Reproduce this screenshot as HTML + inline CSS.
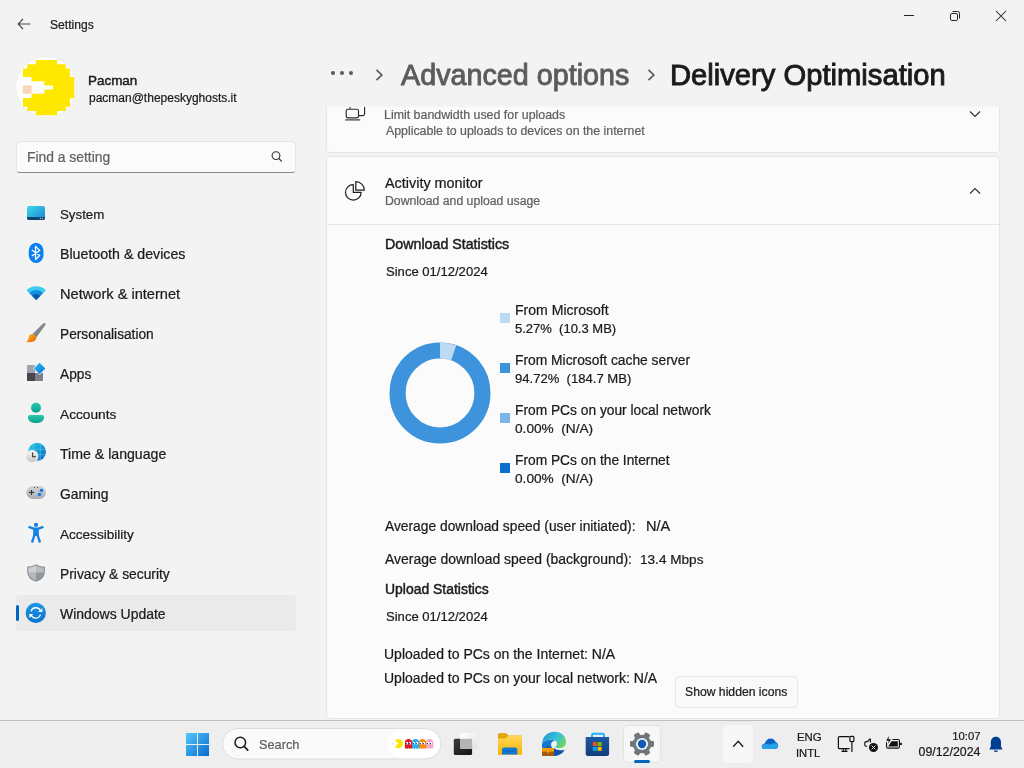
<!DOCTYPE html>
<html><head><meta charset="utf-8"><title>Settings</title>
<style>
html,body{margin:0;padding:0;}
body{width:1024px;height:768px;overflow:hidden;position:relative;background:#f3f3f3;font-family:"Liberation Sans",sans-serif;}
.a{position:absolute;}
.t{position:absolute;white-space:pre;will-change:transform;-webkit-text-stroke:0.22px currentColor;}
svg{display:block;overflow:visible}
</style></head><body>
<svg class="a" style="left:17px;top:18px" width="14" height="12" viewBox="0 0 14 12"><path d="M6 1 L1.2 6 L6 11 M1.2 6 H13.5" fill="none" stroke="#444" stroke-width="1.1"/></svg>
<div class="t" style="left:50.00px;top:18px;font-size:12.1px;line-height:14px;color:#1a1a1a;font-weight:400;">Settings</div>
<div class="a" style="left:904px;top:15px;width:10px;height:1px;background:#222"></div>
<svg class="a" style="left:949px;top:10px" width="12" height="12" viewBox="0 0 12 12"><rect x="1.5" y="3.5" width="7" height="7" rx="1.3" fill="none" stroke="#222" stroke-width="1"/><path d="M3.5 1.5 H8.5 A2 2 0 0 1 10.5 3.5 V8.5" fill="none" stroke="#222" stroke-width="1"/></svg>
<svg class="a" style="left:995px;top:10px" width="12" height="12" viewBox="0 0 12 12"><path d="M1 1 L11 11 M11 1 L1 11" stroke="#222" stroke-width="1.05"/></svg>
<div class="a" style="left:16px;top:57px;width:60px;height:60px;border-radius:50%;background:#fdfdfd;box-shadow:0 0 0 0.5px #e8e8e8"></div>
<svg class="a" style="left:22.75px;top:59.8px" width="51.25" height="55" viewBox="0 0 12 13" preserveAspectRatio="none"><path fill="#ffe800" d="M3 0h5v1.04h-5zM1 1h9v1.04h-9zM0 2h11v1.04h-11zM0 3h11v1.04h-11zM2 4h10v1.04h-10zM5 5h7v1.04h-7zM7 6h5v1.04h-5zM5 7h7v1.04h-7zM2 8h10v1.04h-10zM0 9h11v1.04h-11zM0 10h11v1.04h-11zM1 11h9v1.04h-9zM3 12h5v1.04h-5z"/><rect x="0" y="6" width="2" height="2" fill="#f9d6b8"/></svg>
<div class="t" style="left:87.60px;top:73px;font-size:13.45px;line-height:15px;color:#1a1a1a;font-weight:400;-webkit-text-stroke:0.45px #1a1a1a;">Pacman</div>
<div class="t" style="left:88.50px;top:91px;font-size:12.01px;line-height:14px;color:#1a1a1a;font-weight:400;">pacman@thepeskyghosts.it</div>
<div class="a" style="left:16px;top:141px;width:278px;height:30px;border:1px solid #e5e5e5;border-bottom:1px solid #8a8a8a;border-radius:4px;background:#fbfbfb"></div>
<div class="t" style="left:26.80px;top:149px;font-size:13.85px;line-height:16px;color:#616161;font-weight:400;">Find a setting</div>
<svg class="a" style="left:270px;top:150px" width="14" height="14" viewBox="0 0 14 14"><circle cx="6" cy="5.6" r="3.9" fill="none" stroke="#333" stroke-width="1.1"/><path d="M8.8 8.4 L11.8 11.6" stroke="#333" stroke-width="1.2"/></svg>
<div class="a" style="left:16px;top:595px;width:280px;height:36px;border-radius:4px;background:#eaeaea"></div>
<div class="a" style="left:16px;top:605px;width:3px;height:16px;border-radius:1.5px;background:#0067c0"></div>
<div class="t" style="left:60.30px;top:207px;font-size:13.31px;line-height:15px;color:#1a1a1a;font-weight:400;">System</div>
<div class="t" style="left:60.30px;top:246px;font-size:14.19px;line-height:16px;color:#1a1a1a;font-weight:400;">Bluetooth &amp; devices</div>
<div class="t" style="left:60.30px;top:286px;font-size:14.62px;line-height:16px;color:#1a1a1a;font-weight:400;">Network &amp; internet</div>
<div class="t" style="left:60.30px;top:327px;font-size:13.71px;line-height:15px;color:#1a1a1a;font-weight:400;">Personalisation</div>
<div class="t" style="left:60.30px;top:367px;font-size:13.74px;line-height:15px;color:#1a1a1a;font-weight:400;">Apps</div>
<div class="t" style="left:60.30px;top:407px;font-size:13.69px;line-height:15px;color:#1a1a1a;font-weight:400;">Accounts</div>
<div class="t" style="left:60.30px;top:446px;font-size:14.14px;line-height:16px;color:#1a1a1a;font-weight:400;">Time &amp; language</div>
<div class="t" style="left:60.30px;top:486px;font-size:13.87px;line-height:16px;color:#1a1a1a;font-weight:400;">Gaming</div>
<div class="t" style="left:60.30px;top:527px;font-size:13.55px;line-height:15px;color:#1a1a1a;font-weight:400;">Accessibility</div>
<div class="t" style="left:60.30px;top:566px;font-size:13.82px;line-height:16px;color:#1a1a1a;font-weight:400;">Privacy &amp; security</div>
<div class="t" style="left:60.30px;top:606px;font-size:13.98px;line-height:16px;color:#1a1a1a;font-weight:400;">Windows Update</div>
<svg class="a" style="left:0;top:0" width="60" height="640" viewBox="0 0 60 640">
<defs>
<linearGradient id="gSys" x1="0" y1="0" x2="1" y2="1"><stop offset="0" stop-color="#3fd8e8"/><stop offset="1" stop-color="#1a86d6"/></linearGradient>
<linearGradient id="gBrush" x1="0" y1="0" x2="1" y2="1"><stop offset="0" stop-color="#a8aeb4"/><stop offset="1" stop-color="#5b636b"/></linearGradient>
<linearGradient id="gBr" x1="0" y1="0" x2="1" y2="1"><stop offset="0" stop-color="#ffc21a"/><stop offset="1" stop-color="#ec5a0c"/></linearGradient>
<linearGradient id="gDia" x1="0" y1="0" x2="1" y2="1"><stop offset="0" stop-color="#2fc0f2"/><stop offset="1" stop-color="#0a70d6"/></linearGradient>
<linearGradient id="gAcc" x1="0" y1="0" x2="0" y2="1"><stop offset="0" stop-color="#25cbb2"/><stop offset="1" stop-color="#0e9e88"/></linearGradient>
<linearGradient id="gGlobe" x1="0" y1="0" x2="1" y2="1"><stop offset="0" stop-color="#30d0ea"/><stop offset="1" stop-color="#0b62c0"/></linearGradient>
<linearGradient id="gClock" x1="0" y1="0" x2="0" y2="1"><stop offset="0" stop-color="#f4f4f4"/><stop offset="1" stop-color="#c8c8c8"/></linearGradient>
<linearGradient id="gPad" x1="0" y1="0" x2="0" y2="1"><stop offset="0" stop-color="#d2d5d9"/><stop offset="1" stop-color="#a9aeb4"/></linearGradient>
<linearGradient id="gUpd" x1="0" y1="0" x2="0" y2="1"><stop offset="0" stop-color="#1e98e6"/><stop offset="1" stop-color="#0a72d0"/></linearGradient>
</defs>
<!-- System -->
<rect x="27" y="206" width="18" height="14" rx="2" fill="url(#gSys)"/>
<path d="M27 217 H45 V218 A2 2 0 0 1 43 220 H29 A2 2 0 0 1 27 218 Z" fill="#0b4670"/>
<circle cx="40.3" cy="218.4" r="0.6" fill="#cfe6f5"/><circle cx="42.4" cy="218.4" r="0.6" fill="#cfe6f5"/>
<!-- Bluetooth -->
<rect x="28.7" y="242.8" width="14.8" height="20.2" rx="7.3" ry="8.6" fill="#0a7ff2"/>
<path d="M32.2 250.3 L39.7 255.5 L35.5 259.4 V246.4 L39.7 250.5 L32.2 255.7" fill="none" stroke="#fff" stroke-width="1.3" stroke-linejoin="round" stroke-linecap="round"/>
<!-- Wifi -->
<path d="M36.2 300 L26.44 290.24 A13.8 13.8 0 0 1 45.96 290.24 Z" fill="#3ccaf2"/>
<path d="M36.2 300 L29.2 293 A9.9 9.9 0 0 1 43.2 293 Z" fill="#148ee0"/>
<path d="M36.2 300 L32.03 295.83 A5.9 5.9 0 0 1 40.37 295.83 Z" fill="#0b58a6"/>
<!-- Brush -->
<path d="M43.4 323.3 C44.3 322.5 45.9 323.6 45.5 324.7 L36.2 337.4 L31.8 334.4 Z" fill="url(#gBrush)"/>
<path d="M31 334.3 C33.9 333.6 36.8 335.4 36.2 338.6 C35.6 341.7 31.3 343 26 342 C27.9 341 28.3 339.2 28.7 337.4 C29.1 335.6 29.7 334.6 31 334.3 Z" fill="url(#gBr)"/>
<!-- Apps -->
<rect x="27" y="365" width="8" height="8" fill="#a0a5ab"/>
<rect x="27" y="373" width="8" height="8" fill="#44484d"/>
<rect x="35" y="373" width="8" height="8" fill="#7c8086"/>
<path d="M39.6 362 L46.1 368.5 L39.6 375 L33.1 368.5 Z" fill="#f3f3f3"/>
<path d="M39.6 362.8 L45.3 368.5 L39.6 374.2 L33.9 368.5 Z" fill="url(#gDia)"/>
<!-- Accounts -->
<circle cx="36" cy="407.8" r="5" fill="url(#gAcc)"/>
<path d="M28 416.9 A1.9 1.9 0 0 1 29.9 415 H42.1 A1.9 1.9 0 0 1 44 416.9 V417.4 C44 420.9 40.5 423 36 423 C31.5 423 28 420.9 28 417.4 Z" fill="url(#gAcc)"/>
<!-- Time & language -->
<circle cx="37" cy="451.8" r="9" fill="url(#gGlobe)"/>
<path d="M33.9 443.2 V460.4 M40.3 443.2 V460.4 M28.2 449.3 H45.8 M28.2 454.5 H45.8" stroke="#5ad8f2" stroke-width="0.6" opacity="0.8"/>
<circle cx="32" cy="456.3" r="6.4" fill="#f3f3f3"/>
<circle cx="32" cy="456.3" r="5.9" fill="url(#gClock)"/>
<path d="M32.6 452.4 V456.6 H35.7" fill="none" stroke="#444" stroke-width="1.2"/>
<!-- Gaming -->
<rect x="26.2" y="486" width="19.8" height="13" rx="6.5" fill="url(#gPad)"/>
<path d="M29 492.4 H34 M31.5 489.9 V494.9" stroke="#353535" stroke-width="1.1"/>
<circle cx="41.5" cy="490.4" r="1.7" fill="#0a76e0"/><circle cx="39.5" cy="494.4" r="1.7" fill="#0a76e0"/>
<circle cx="34.4" cy="487.5" r="0.55" fill="#333"/><circle cx="37.5" cy="487.5" r="0.55" fill="#333"/>
<!-- Accessibility -->
<g fill="#1583e0" stroke="#1583e0">
<circle cx="36" cy="524.9" r="2.1" stroke="none"/>
<path d="M29.4 527.1 L33.5 528.6 H38.5 L42.6 527.1" fill="none" stroke-width="2.3" stroke-linecap="round" stroke-linejoin="round"/>
<rect x="33.2" y="528" width="5.6" height="8" stroke="none"/>
<path d="M34.3 535.5 L32.3 541.6 M37.7 535.5 L39.7 541.6" fill="none" stroke-width="2.4" stroke-linecap="round"/>
</g>
<!-- Shield -->
<path d="M36 564.2 C38.6 565.8 41.6 566.6 44.9 566.6 V571.2 C44.9 576.6 41.5 580 36 581.8 C30.5 580 27.2 576.6 27.2 571.2 V566.6 C30.4 566.6 33.4 565.8 36 564.2 Z" fill="#8e9399"/>
<path d="M36 565.6 C38.3 566.9 41 567.6 43.7 567.7 V572.8 H36 Z" fill="#b9bdc2"/>
<path d="M36 565.6 C33.7 566.9 31 567.6 28.4 567.7 V572.8 H36 Z" fill="#cdd1d5"/>
<path d="M28.4 572.8 H36 V580.4 C31.4 578.8 28.6 576.2 28.4 572.8 Z" fill="#b3b7bc"/>
<path d="M43.7 572.8 H36 V580.4 C40.6 578.8 43.5 576.2 43.7 572.8 Z" fill="#92979d"/>
<!-- Windows Update -->
<circle cx="35.8" cy="612.9" r="10.1" fill="url(#gUpd)"/>
<path d="M31 611.2 A5.1 5.1 0 0 1 40.4 610.6" fill="none" stroke="#fff" stroke-width="1.3"/>
<path d="M38.3 611.9 H42.3 V607.9 Z" fill="#fff"/>
<path d="M40.6 614.6 A5.1 5.1 0 0 1 31.2 615.2" fill="none" stroke="#fff" stroke-width="1.3"/>
<path d="M33.3 613.9 H29.3 V617.9 Z" fill="#fff"/>
</svg>

<div class="a" style="left:331.3px;top:71px;width:4px;height:4px;border-radius:50%;background:#5a5a5a"></div>
<div class="a" style="left:340.2px;top:71px;width:4px;height:4px;border-radius:50%;background:#5a5a5a"></div>
<div class="a" style="left:348.8px;top:71px;width:4px;height:4px;border-radius:50%;background:#5a5a5a"></div>
<svg class="a" style="left:374px;top:68px" width="12" height="14" viewBox="0 0 12 14"><path d="M2.5 1.8 L7.8 7 L2.5 12.2" fill="none" stroke="#5a5a5a" stroke-width="1.7"/></svg>
<div class="t" style="left:401.40px;top:59px;font-size:28.72px;line-height:32px;color:#5c5c5c;font-weight:400;-webkit-text-stroke:0.9px #5c5c5c;">Advanced options</div>
<svg class="a" style="left:646px;top:68px" width="12" height="14" viewBox="0 0 12 14"><path d="M2.5 1.8 L7.8 7 L2.5 12.2" fill="none" stroke="#5a5a5a" stroke-width="1.7"/></svg>
<div class="t" style="left:669.80px;top:59px;font-size:29.2px;line-height:32px;color:#1a1a1a;font-weight:400;-webkit-text-stroke:0.9px #1a1a1a;">Delivery Optimisation</div>
<div class="a" style="left:0;top:107px;width:1024px;height:613px;overflow:hidden">
<div class="a" style="left:326px;top:-60px;width:674px;height:106px;border:1px solid #e5e5e5;border-radius:4px;background:#fbfbfb;box-sizing:border-box;"></div>
<div class="t" style="left:384.30px;top:1px;font-size:12.4px;line-height:14px;color:#5f5f5f;font-weight:400;">Limit bandwidth used for uploads</div>
<div class="t" style="left:385.50px;top:17px;font-size:12.35px;line-height:14px;color:#5f5f5f;font-weight:400;">Applicable to uploads to devices on the internet</div>
<svg class="a" style="left:344px;top:-4px" width="24" height="20" viewBox="0 0 24 20"><rect x="2.2" y="6.2" width="12.3" height="8.6" rx="1.6" fill="none" stroke="#2a2a2a" stroke-width="1.15"/><path d="M6 6.2 V2" stroke="#2a2a2a" stroke-width="1"/><path d="M14.5 12.6 H18.5 A2 2 0 0 0 20.6 10.6 V2" fill="none" stroke="#2a2a2a" stroke-width="1.15"/><path d="M1.2 16.9 H16.2" stroke="#333" stroke-width="1.15"/></svg>
<svg class="a" style="left:968px;top:2px" width="14" height="10" viewBox="0 0 14 10"><path d="M2 2.5 L7 7.5 L12 2.5" fill="none" stroke="#333" stroke-width="1.2"/></svg>
<div class="a" style="left:326px;top:49px;width:674px;height:563px;border:1px solid #e5e5e5;border-radius:4px;background:#fbfbfb;box-sizing:border-box;"></div>
<div class="a" style="left:327px;top:117px;width:672px;height:1px;background:#e5e5e5"></div>
<svg class="a" style="left:344px;top:73px" width="22" height="22" viewBox="0 0 22 22"><path d="M9.3 4.6 A7.8 7.8 0 1 0 17.1 12.4 H9.3 Z" fill="none" stroke="#1e1e1e" stroke-width="1.2" stroke-linejoin="round"/><path d="M11.8 1.7 A8.5 8.5 0 0 1 20.3 10.2 H11.8 Z" fill="none" stroke="#1e1e1e" stroke-width="1.2" stroke-linejoin="round"/></svg>
<div class="t" style="left:385.40px;top:68px;font-size:14.4px;line-height:16px;color:#1a1a1a;font-weight:400;">Activity monitor</div>
<div class="t" style="left:384.80px;top:87px;font-size:12.24px;line-height:14px;color:#5f5f5f;font-weight:400;">Download and upload usage</div>
<svg class="a" style="left:968px;top:79px" width="14" height="10" viewBox="0 0 14 10"><path d="M2 7.5 L7 2.5 L12 7.5" fill="none" stroke="#333" stroke-width="1.2"/></svg>
<div class="t" style="left:384.50px;top:129px;font-size:14.24px;line-height:16px;color:#1a1a1a;font-weight:400;-webkit-text-stroke:0.45px #1a1a1a;">Download Statistics</div>
<div class="t" style="left:385.50px;top:157px;font-size:13.07px;line-height:15px;color:#1a1a1a;font-weight:400;">Since 01/12/2024</div>
<svg class="a" style="left:380px;top:226px" width="120" height="120" viewBox="0 0 120 120"><circle cx="60" cy="60" r="42.45" fill="none" stroke="#3d94dc" stroke-width="16.1"/><path d="M60 9.5 A50.5 50.5 0 0 1 76.3 12.2 L71.1 27.4 A34.4 34.4 0 0 0 60 25.6 Z" fill="#bcdaf2"/></svg>
<div class="a" style="left:500px;top:206px;width:10px;height:10px;background:#bcdaf2"></div>
<div class="t" style="left:515.00px;top:195px;font-size:14.05px;line-height:16px;color:#1a1a1a;font-weight:400;">From Microsoft</div>
<div class="t" style="left:515.30px;top:214px;font-size:13.0px;line-height:15px;color:#1a1a1a;font-weight:400;">5.27%&nbsp; (10.3 MB)</div>
<div class="a" style="left:500px;top:256px;width:10px;height:10px;background:#3d94dc"></div>
<div class="t" style="left:515.00px;top:245px;font-size:13.82px;line-height:16px;color:#1a1a1a;font-weight:400;">From Microsoft cache server</div>
<div class="t" style="left:515.30px;top:264px;font-size:13.09px;line-height:15px;color:#1a1a1a;font-weight:400;">94.72%&nbsp; (184.7 MB)</div>
<div class="a" style="left:500px;top:306px;width:10px;height:10px;background:#7ab6e9"></div>
<div class="t" style="left:515.00px;top:296px;font-size:13.77px;line-height:15px;color:#1a1a1a;font-weight:400;">From PCs on your local network</div>
<div class="t" style="left:515.30px;top:314px;font-size:13.67px;line-height:15px;color:#1a1a1a;font-weight:400;">0.00%&nbsp; (N/A)</div>
<div class="a" style="left:500px;top:356px;width:10px;height:10px;background:#0a6fce"></div>
<div class="t" style="left:515.00px;top:346px;font-size:13.77px;line-height:15px;color:#1a1a1a;font-weight:400;">From PCs on the Internet</div>
<div class="t" style="left:515.30px;top:364px;font-size:13.67px;line-height:15px;color:#1a1a1a;font-weight:400;">0.00%&nbsp; (N/A)</div>
<div class="t" style="left:385.30px;top:412px;font-size:13.8px;line-height:15px;color:#1a1a1a;font-weight:400;">Average download speed (user initiated):</div>
<div class="t" style="left:646.40px;top:411px;font-size:14.5px;line-height:16px;color:#1a1a1a;font-weight:400;">N/A</div>
<div class="t" style="left:385.30px;top:444px;font-size:13.95px;line-height:16px;color:#1a1a1a;font-weight:400;">Average download speed (background):</div>
<div class="t" style="left:640.30px;top:445px;font-size:13.6px;line-height:15px;color:#1a1a1a;font-weight:400;">13.4 Mbps</div>
<div class="t" style="left:385.20px;top:474px;font-size:13.95px;line-height:16px;color:#1a1a1a;font-weight:400;-webkit-text-stroke:0.45px #1a1a1a;">Upload Statistics</div>
<div class="t" style="left:385.50px;top:502px;font-size:13.07px;line-height:15px;color:#1a1a1a;font-weight:400;">Since 01/12/2024</div>
<div class="t" style="left:384.10px;top:539px;font-size:14.0px;line-height:16px;color:#1a1a1a;font-weight:400;">Uploaded to PCs on the Internet: N/A</div>
<div class="t" style="left:384.10px;top:563px;font-size:14.0px;line-height:16px;color:#1a1a1a;font-weight:400;">Uploaded to PCs on your local network: N/A</div>
</div>
<div class="a" style="left:675px;top:676px;width:123px;height:32px;box-sizing:border-box;border:1px solid #e8e8e8;border-radius:4px;background:#f9f9f9"></div>
<div class="t" style="left:685.30px;top:685px;font-size:12.2px;line-height:14px;color:#1a1a1a;font-weight:400;">Show hidden icons</div>
<div class="a" style="left:0;top:720px;width:1024px;height:48px;background:#eeeeee;border-top:1px solid #bfbfbf;box-sizing:border-box"></div>
<svg class="a" style="left:0;top:720px" width="1024" height="48" viewBox="0 720 1024 48">
<defs>
<linearGradient id="gWin" x1="0" y1="0" x2="1" y2="1"><stop offset="0" stop-color="#55c8fb"/><stop offset="1" stop-color="#0669cf"/></linearGradient>
<linearGradient id="gTvD" x1="0" y1="0" x2="1" y2="1"><stop offset="0" stop-color="#3a3a3a"/><stop offset="1" stop-color="#141414"/></linearGradient>
<linearGradient id="gTvL" x1="0" y1="0" x2="1" y2="1"><stop offset="0" stop-color="#ffffff"/><stop offset="1" stop-color="#e2e2e2"/></linearGradient>
<linearGradient id="gFold" x1="0" y1="0" x2="0" y2="1"><stop offset="0" stop-color="#ffd75e"/><stop offset="1" stop-color="#f5b600"/></linearGradient>
<linearGradient id="gEdge" x1="0" y1="0" x2="1" y2="0.6"><stop offset="0" stop-color="#1b8fd6"/><stop offset="0.6" stop-color="#35c1d8"/><stop offset="1" stop-color="#6ad468"/></linearGradient>
<linearGradient id="gStore" x1="0" y1="0" x2="0" y2="1"><stop offset="0" stop-color="#1d5aa6"/><stop offset="1" stop-color="#123c78"/></linearGradient>
<linearGradient id="gCloud" x1="0" y1="0" x2="0" y2="1"><stop offset="0" stop-color="#0a5fc0"/><stop offset="1" stop-color="#2a9df0"/></linearGradient>
</defs>
<!-- Start -->
<g fill="url(#gWin)">
<path d="M186 733 H197 V744 H186 Z M198 733 H209 V744 H198 Z M186 745 H197 V756 H186 Z M198 745 H209 V756 H198 Z"/>
</g>
<!-- Search pill -->
<rect x="222.5" y="728.5" width="218.5" height="30.5" rx="15.25" fill="#fafafa" stroke="#dedede" stroke-width="1"/>
<circle cx="240.3" cy="742.5" r="5.3" fill="none" stroke="#1c1c1c" stroke-width="1.5"/>
<path d="M244.1 746.3 L247.8 750.2" stroke="#1c1c1c" stroke-width="1.7" stroke-linecap="round"/>
<rect x="387.5" y="730.5" width="52" height="27" rx="13.5" fill="#ffffff"/>
<!-- pacman + ghosts -->
<path d="M395 740.6 A4.6 4.6 0 1 1 395 746.6 L398.4 743.6 Z" fill="#ffe600"/>
<rect x="392" y="743.2" width="1" height="1" fill="#f5c8a8"/>
<g>
<path d="M405 749 V742.5 A3.55 3.55 0 0 1 412.1 742.5 V749 L410.9 748 L409.8 749 L408.6 748 L407.4 749 L406.2 748 Z" fill="#e8141e"/>
<path d="M412 749 V742.5 A3.6 3.6 0 0 1 419.2 742.5 V749 L418 748 L416.8 749 L415.6 748 L414.4 749 L413.2 748 Z" fill="#26aef0"/>
<path d="M419 749 V742.5 A3.55 3.55 0 0 1 426.1 742.5 V749 L424.9 748 L423.8 749 L422.6 748 L421.4 749 L420.2 748 Z" fill="#f58a10"/>
<path d="M426 749 V742.5 A3.6 3.6 0 0 1 433.2 742.5 V749 L432 748 L430.8 749 L429.6 748 L428.4 749 L427.2 748 Z" fill="#f3a6c6"/>
<g fill="#ffffff"><rect x="406" y="742" width="2" height="2.4"/><rect x="409" y="742" width="2" height="2.4"/><rect x="413" y="742" width="2" height="2.4"/><rect x="416" y="742" width="2" height="2.4"/><rect x="420" y="742" width="2" height="2.4"/><rect x="423" y="742" width="2" height="2.4"/><rect x="427" y="742" width="2" height="2.4"/><rect x="430" y="742" width="2" height="2.4"/></g>
<g fill="#1a3cc8"><rect x="406" y="743" width="1" height="1.2"/><rect x="409" y="743" width="1" height="1.2"/><rect x="413" y="743" width="1" height="1.2"/><rect x="416" y="743" width="1" height="1.2"/><rect x="420" y="743" width="1" height="1.2"/><rect x="423" y="743" width="1" height="1.2"/><rect x="427" y="743" width="1" height="1.2"/><rect x="430" y="743" width="1" height="1.2"/></g>
</g>
<!-- Task view -->
<rect x="453.8" y="738.8" width="18.3" height="16.1" rx="1.5" fill="url(#gTvD)"/>
<rect x="460" y="732.9" width="17.7" height="15.9" rx="1.5" fill="url(#gTvL)"/>
<rect x="460" y="738.8" width="12.1" height="10" fill="#b4b4b4"/>
<!-- Folder -->
<path d="M498 735 A2 2 0 0 1 500 733 H506 L508.5 735.6 H522 V754.5 H498 Z" fill="#e4a70a"/>
<path d="M498 738.5 L506 738.5 L508.5 735.6 H522 V754.5 H498 Z" fill="url(#gFold)"/>
<path d="M502 749.5 A2 2 0 0 1 504 747.6 H515.3 A2 2 0 0 1 517.3 749.5 V754.5 H502 Z" fill="#0f78d4"/>
<path d="M505 751.2 H514" stroke="#0a5fb0" stroke-width="0.9"/>
<!-- Edge -->
<path d="M542 756 V744 C543 741.5 547 739.5 552 739.5 C553.5 739.5 554.5 740 555.2 740.6 C552.6 741 551 742.6 551 744.6 C551 747 553 749.4 556 750.4 L555 756 Z" fill="#1178d4"/>
<path d="M542 744 C542 737 547.5 731.75 554.5 731.75 C561.5 731.75 566 736.5 566 742 C566 746 563 748.2 559.5 748.2 C557 748.2 555.3 747.5 554.5 746.8 C556 746.6 557 745.2 557 743.8 C557 741.2 555 739.5 552 739.5 C547 739.5 543 741.5 542 744 Z" fill="url(#gEdge)"/>
<circle cx="553.8" cy="744" r="2.3" fill="#f2f2f2"/>
<path d="M554 748.3 C556.5 750.2 560 750.9 564.6 749.7 C562.6 753.6 558.5 756 554 756 Z" fill="#0b52ad"/>
<rect x="542" y="748" width="12" height="8" rx="0.8" fill="#a85a0c"/>
<rect x="542" y="748" width="12" height="3.6" fill="#f59c00"/>
<rect x="547.4" y="751" width="1.6" height="1.6" fill="#ffd21a"/>
<path d="M546.5 748 V747 H549.5 V748" fill="none" stroke="#3a3a3a" stroke-width="0.8"/>
<!-- Store -->
<path d="M592 738 V735 A1.2 1.2 0 0 1 593.2 733.8 H602.8 A1.2 1.2 0 0 1 604 735 V738" fill="none" stroke="#1ab4f6" stroke-width="1.9"/>
<path d="M585.7 737 H609.1 V753.5 A2.5 2.5 0 0 1 606.6 756 H588.2 A2.5 2.5 0 0 1 585.7 753.5 Z" fill="url(#gStore)"/>
<rect x="592.8" y="742" width="4" height="4" fill="#f25022"/>
<rect x="597.6" y="742" width="4" height="4" fill="#7fba00"/>
<rect x="592.8" y="746.8" width="4" height="4" fill="#00a4ef"/>
<rect x="597.6" y="746.8" width="4" height="4" fill="#ffb900"/>
<!-- Settings (active) -->
<rect x="623.5" y="725.5" width="37" height="37" rx="4.5" fill="#f7f7f7" stroke="#e3e3e3" stroke-width="1"/>
<g transform="translate(642 744)" fill="#6d757d">
<circle r="9.3"/>
<rect x="6" y="-2.9" width="6" height="5.8" rx="1.4" transform="rotate(0)"/><rect x="6" y="-2.9" width="6" height="5.8" rx="1.4" transform="rotate(60)"/><rect x="6" y="-2.9" width="6" height="5.8" rx="1.4" transform="rotate(120)"/><rect x="6" y="-2.9" width="6" height="5.8" rx="1.4" transform="rotate(180)"/><rect x="6" y="-2.9" width="6" height="5.8" rx="1.4" transform="rotate(240)"/><rect x="6" y="-2.9" width="6" height="5.8" rx="1.4" transform="rotate(300)"/>
<circle r="6.1" fill="#f3f3f3"/>
<circle r="4.2" fill="#1559b8"/>
</g>
<rect x="634" y="760" width="16" height="3" rx="1.5" fill="#0067c0"/>
<!-- chevron button -->
<rect x="723" y="725" width="30" height="38" rx="4" fill="#f7f7f7"/>
<path d="M733.2 746.8 L738.2 741.2 L743.2 746.8" fill="none" stroke="#1a1a1a" stroke-width="1.3"/>
<!-- OneDrive -->
<path d="M764.5 749 C762.5 749 761.8 747.8 761.8 746.5 C761.8 744.8 763 743.8 764.8 743.6 C765.5 740.5 767.8 738.5 770.6 738.5 C773 738.5 775 740 775.8 742.2 C777.3 742.5 778.2 744 778.2 745.6 C778.2 747.6 776.8 749 774.8 749 Z" fill="#0c64c4"/>
<path d="M764.5 749 C762.5 749 761.8 747.8 761.8 746.5 C762.5 744.5 765 743.5 768.5 744.5 L774.5 743.2 C776.8 743.2 778.2 744.2 778.2 745.6 C778.2 747.6 776.8 749 774.8 749 Z" fill="#28a0ec"/>
<!-- Monitor -->
<g fill="none" stroke="#111" stroke-width="1.2">
<path d="M849.5 736.6 H839.6 A1.2 1.2 0 0 0 838.4 737.8 V747.4 A1.2 1.2 0 0 0 839.6 748.6 H849.6"/>
<path d="M841.5 751.4 H847.5 M843.2 748.6 V751.4 M845.8 748.6 V751.4"/>
<rect x="849.9" y="736.4" width="4" height="5.2" rx="1"/>
<path d="M851.9 741.6 V752"/>
</g>
<!-- Volume muted -->
<path d="M867.2 746.2 H866 A1.2 1.2 0 0 1 864.8 745 V742.8 A1.2 1.2 0 0 1 866 741.6 H867.6 L869.6 739.1 A0.5 0.5 0 0 1 870.4 739.4 V742.4" fill="none" stroke="#111" stroke-width="1.15" stroke-linejoin="round"/>
<circle cx="873.5" cy="747.5" r="4.5" fill="#111"/>
<path d="M871.6 745.6 L875.4 749.4 M875.4 745.6 L871.6 749.4" stroke="#eee" stroke-width="0.9"/>
<!-- Battery -->
<path d="M892.4 739.45 H898 A1.45 1.45 0 0 1 899.45 740.9 V746.7 A1.45 1.45 0 0 1 898 748.15 H888 A1.45 1.45 0 0 1 886.55 746.7 V742.2" fill="none" stroke="#111" stroke-width="1.1"/>
<rect x="900" y="742.7" width="1.9" height="2.4" rx="0.5" fill="#111"/>
<path d="M891.4 741.2 H897.8 V746.6 H888.3 Z" fill="#111"/>
<path d="M888.9 735.9 L886.2 740.7 H888.7 L888.3 743.7 L890.9 739.3 H888.5 Z" fill="#111"/>
<!-- Bell -->
<path d="M995.9 736.8 C992.5 736.8 990.8 739.5 990.8 742.5 V746.5 L989.3 749.6 H1002.6 L1001 746.5 V742.5 C1001 739.5 999.3 736.8 995.9 736.8 Z" fill="#003e92"/>
<path d="M993.8 750.4 A2.1 1.6 0 0 0 998 750.4 Z" fill="#003e92"/>
</svg>

<div class="t" style="left:797.00px;top:731px;font-size:11.4px;line-height:12px;color:#1a1a1a;font-weight:400;">ENG</div>
<div class="t" style="left:795.50px;top:747px;font-size:11.2px;line-height:12px;color:#1a1a1a;font-weight:400;">INTL</div>
<div class="t" style="left:900.00px;top:730px;font-size:11.3px;line-height:12px;color:#1a1a1a;font-weight:400;width:80.5px;text-align:right;">10:07</div>
<div class="t" style="left:880.00px;top:745px;font-size:12.4px;line-height:14px;color:#1a1a1a;font-weight:400;width:100.5px;text-align:right;">09/12/2024</div>
<div class="t" style="left:259.00px;top:737px;font-size:12.76px;line-height:15px;color:#5d5d5d;font-weight:400;">Search</div>
</body></html>
